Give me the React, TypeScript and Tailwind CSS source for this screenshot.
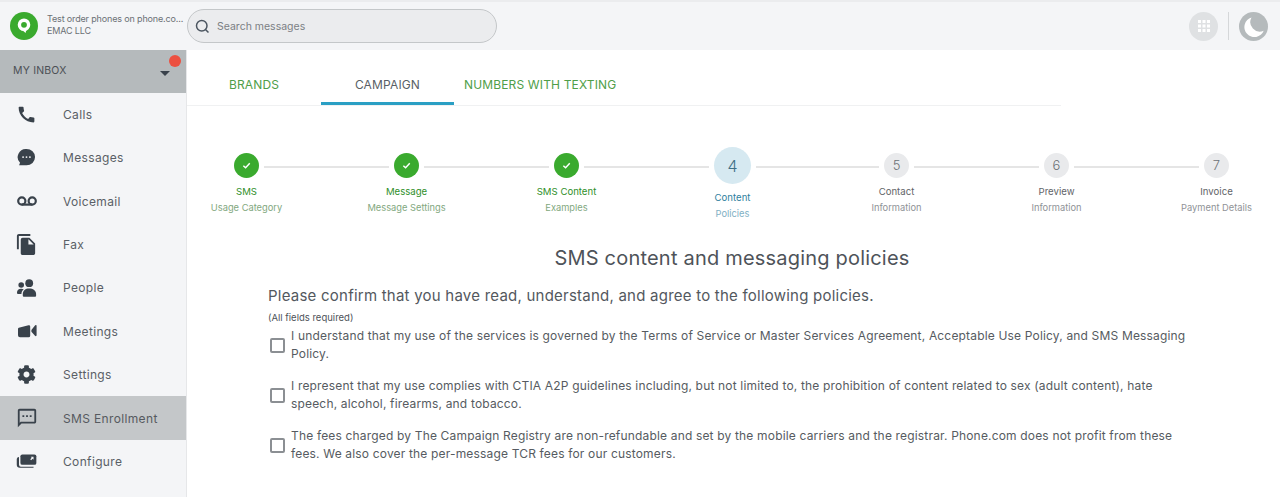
import { FaCog } from "react-icons/fa";
import { MdCall, MdFileCopy, MdOutlineSms, MdApps } from "react-icons/md";
import { Fragment, type ReactNode } from "react";

function LogoMark() {
  return (
    <svg viewBox="0 0 28 28" className="h-7 w-7 shrink-0">
      <circle cx="14" cy="14" r="14" fill="#3aaa2e" />
      <path d="M11.5 17.6 L15.6 21 L16.4 17.4 Z" fill="#fff" />
      <circle cx="14" cy="12.8" r="4.6" fill="none" stroke="#fff" strokeWidth="3.4" />
    </svg>
  );
}

function ChatIcon() {
  return (
    <svg viewBox="0 0 20 20" className="h-[19px] w-[19px]" fill="#39424b">
      <path d="M10 1a9 8.6 0 0 1 0 17.2H2.2l1-2.6A8.6 8.6 0 0 1 10 1z" />
      <circle cx="6.4" cy="9.6" r="1" fill="#f4f5f7" />
      <circle cx="10" cy="9.6" r="1" fill="#f4f5f7" />
      <circle cx="13.6" cy="9.6" r="1" fill="#f4f5f7" />
    </svg>
  );
}

function VoicemailIcon() {
  return (
    <svg viewBox="0 0 20 10" className="h-[10px] w-[20px]" fill="none" stroke="#39424b" strokeWidth="2.2">
      <circle cx="4.8" cy="5" r="3.6" />
      <circle cx="15.2" cy="5" r="3.6" />
      <path d="M4.8 8.6h10.4" />
    </svg>
  );
}

function PeopleIcon() {
  return (
    <svg viewBox="0 0 20 18" className="h-[18px] w-[20px]" fill="#39424b">
      <circle cx="12.2" cy="4.2" r="3.9" />
      <path d="M5.8 15.2c0-3.6 2.6-5.6 6.4-5.6s6.9 2 6.9 5.6v1.5a1 1 0 0 1-1 1H6.8a1 1 0 0 1-1-1z" />
      <circle cx="4.2" cy="6" r="2.8" />
      <path d="M0 13.6c0-2.4 1.6-3.9 4.2-3.9 1 0 1.8.2 2.5.6-1.4 1.1-2.2 2.7-2.3 4.7H1a1 1 0 0 1-1-1z" />
    </svg>
  );
}

function MeetingIcon() {
  return (
    <svg viewBox="0 0 20 14" className="h-[14px] w-[20px]" fill="#39424b">
      <path d="M1.8 3.8 L11.5 1.2a1.4 1.4 0 0 1 1.7 1.3v9.2a1.6 1.6 0 0 1-1.6 1.6H3a2 2 0 0 1-2-2V5a1.2 1.2 0 0 1 .8-1.2z" />
      <path d="M14.4 6 L18 1.4a.9.9 0 0 1 1.6.6v9.2a.9.9 0 0 1-1.6.6 L14.4 7.8z" />
    </svg>
  );
}

function ConfigureIcon() {
  return (
    <svg viewBox="0 0 22 16" className="h-[15px] w-[21px]" fill="#39424b">
      <rect x="4.5" y="0.5" width="17" height="11" rx="2" />
      <path d="M3 3.2v8.3a2 2 0 0 0 2 2h13.5v1.2H4a3.4 3.4 0 0 1-3.4-3.4V5.2A2.4 2.4 0 0 1 3 3.2z" />
      <path d="M15.5 3h3v3l-1-1-1.6 1.6-.9-.9L16.5 4z" fill="#f4f5f7" />
    </svg>
  );
}

const navItems: { label: string; icon: ReactNode; active?: boolean }[] = [
  { label: "Calls", icon: <MdCall className="text-[21px] text-[#39424b]" /> },
  { label: "Messages", icon: <ChatIcon /> },
  { label: "Voicemail", icon: <VoicemailIcon /> },
  { label: "Fax", icon: <MdFileCopy className="text-[23px] text-[#39424b]" /> },
  { label: "People", icon: <PeopleIcon /> },
  { label: "Meetings", icon: <MeetingIcon /> },
  { label: "Settings", icon: <FaCog className="text-[19px] text-[#39424b]" /> },
  { label: "SMS Enrollment", icon: <MdOutlineSms className="text-[22px] text-[#39424b]" />, active: true },
  { label: "Configure", icon: <ConfigureIcon /> },
];

type StepState = "done" | "active" | "todo";

const steps: { title: string; sub: string; state: StepState; num?: number }[] = [
  { title: "SMS", sub: "Usage Category", state: "done" },
  { title: "Message", sub: "Message Settings", state: "done" },
  { title: "SMS Content", sub: "Examples", state: "done" },
  { title: "Content", sub: "Policies", state: "active", num: 4 },
  { title: "Contact", sub: "Information", state: "todo", num: 5 },
  { title: "Preview", sub: "Information", state: "todo", num: 6 },
  { title: "Invoice", sub: "Payment Details", state: "todo", num: 7 },
];

const policies = [
  "I understand that my use of the services is governed by the Terms of Service or Master Services Agreement, Acceptable Use Policy, and SMS Messaging Policy.",
  "I represent that my use complies with CTIA A2P guidelines including, but not limited to, the prohibition of content related to sex (adult content), hate speech, alcohol, firearms, and tobacco.",
  "The fees charged by The Campaign Registry are non-refundable and set by the mobile carriers and the registrar. Phone.com does not profit from these fees. We also cover the per-message TCR fees for our customers.",
];

function Step({ title, sub, state, num }: (typeof steps)[number]) {
  if (state === "active") {
    return (
      <div className="flex w-[37px] flex-col items-center">
        <div className="flex h-[37px] w-[37px] items-center justify-center rounded-full bg-[#d6e9f1] text-[16px] font-light text-[#3f6f85]">
          {num}
        </div>
        <div className="mt-[7px] whitespace-nowrap text-[9.6px] leading-[14px] text-[#2f7f9e]">{title}</div>
        <div className="mt-[2px] whitespace-nowrap text-[9.3px] leading-[14px] text-[#7fb0c4]">{sub}</div>
      </div>
    );
  }
  const done = state === "done";
  return (
    <div className="mt-[6px] flex w-[25px] flex-col items-center">
      <div
        className={
          done
            ? "flex h-[25px] w-[25px] items-center justify-center rounded-full bg-[#3aaa2e] text-white"
            : "flex h-[25px] w-[25px] items-center justify-center rounded-full bg-[#e9eaec] text-[13px] font-light text-[#6b7075]"
        }
      >
        {done ? (
          <svg viewBox="0 0 10 10" className="h-[9px] w-[9px]" fill="none" stroke="currentColor" strokeWidth="1.6">
            <path d="M1.5 5.3 L4 7.6 L8.6 2.6" />
          </svg>
        ) : (
          num
        )}
      </div>
      <div
        className={
          done
            ? "mt-[7px] whitespace-nowrap text-[9.6px] leading-[14px] text-[#2f8f2a]"
            : "mt-[7px] whitespace-nowrap text-[9.6px] leading-[14px] text-[#5f6468]"
        }
      >
        {title}
      </div>
      <div
        className={
          done
            ? "mt-[2px] whitespace-nowrap text-[9.3px] leading-[14px] text-[#82a880]"
            : "mt-[2px] whitespace-nowrap text-[9.3px] leading-[14px] text-[#8f9397]"
        }
      >
        {sub}
      </div>
    </div>
  );
}

export default function App() {
  return (
    <div className="flex h-[497px] w-[1280px] flex-col overflow-hidden bg-white font-['Inter',sans-serif] text-[#5a5f66]">
      <header className="flex h-[50px] shrink-0 items-center border-t-2 border-[#ebecee] bg-[#f4f5f7]">
        <div className="flex w-[187px] shrink-0 items-center pl-[10px]">
          <LogoMark />
          <div className="mb-[2px] ml-[9px] whitespace-nowrap text-[9px] leading-[12px] tracking-[-0.15px] text-[#6b7075]">
            <div>Test order phones on phone.co...</div>
            <div>EMAC LLC</div>
          </div>
        </div>
        <div className="flex h-[34px] w-[310px] items-center rounded-full border-[1.5px] border-[#c4c7c9] bg-[#ebecee] pl-[7px]">
          <svg viewBox="0 0 16 16" className="h-[15px] w-[15px]" fill="none" stroke="#4b5560" strokeWidth="1.6">
            <circle cx="7.2" cy="7.2" r="5.6" />
            <path d="M11.2 11.2 L14.4 14.4" />
          </svg>
          <span className="ml-[7px] pt-[1px] text-[10.5px] text-[#7b7f84]">Search messages</span>
        </div>
        <div className="ml-auto flex items-center pr-[12px]">
          <div className="flex h-[29px] w-[29px] items-center justify-center rounded-full bg-[#dfe1e3]">
            <MdApps className="text-[18px] text-white" />
          </div>
          <div className="mx-[10px] h-[28px] w-px bg-[#d5d7d9]" />
          <div className="h-[29px] w-[29px]">
            <svg viewBox="0 0 29 29" className="h-[29px] w-[29px]">
              <circle cx="14.5" cy="14.5" r="14.5" fill="#b5babc" />
              <path d="M12.5 5.5a10 10 0 1 0 12.2 13.2 a9.5 9.5 0 0 1-12.2-13.2z" fill="#fff" />
            </svg>
          </div>
        </div>
      </header>

      <div className="flex min-h-0 flex-1">
        <aside className="w-[187px] shrink-0 border-r border-[#e6e7e9] bg-[#f4f5f7]">
          <div className="relative flex h-[42.6px] items-center justify-between bg-[#b5babc] pl-[13px] pr-[16px] text-[10.5px] tracking-[0.2px] text-[#4c5055]">
            <span>MY INBOX</span>
            <span className="mt-[5px] h-0 w-0 border-x-[5px] border-t-[5px] border-x-transparent border-t-[#39424b]" />
            <span className="absolute right-[5px] top-[5px] h-3 w-3 rounded-full bg-[#ec5040]" />
          </div>
          {navItems.map((item) => (
            <div
              key={item.label}
              className={
                item.active
                  ? "flex h-[43.4px] items-center bg-[#c4c7c9] text-[12px] tracking-[0.35px] text-[#565a60]"
                  : "flex h-[43.4px] items-center text-[12px] tracking-[0.35px] text-[#5a5f66]"
              }
            >
              <span className="flex w-[63px] justify-center pr-[10px]">{item.icon}</span>
              <span className="pt-[1px]">{item.label}</span>
            </div>
          ))}
        </aside>

        <main className="min-w-0 flex-1">
          <div className="flex h-[56px] w-[874px] border-b border-[#f0f1f2] text-[12px] tracking-[0.15px]">
            <div className="flex w-[134px] items-center justify-center pt-[15px] text-[#4f9e49]">BRANDS</div>
            <div className="flex w-[133px] items-center justify-center border-b-[3px] border-[#2a9fc4] pt-[17px] text-[#5a5f66]">
              CAMPAIGN
            </div>
            <div className="flex items-center pl-[10px] pt-[15px] text-[#4f9e49]">NUMBERS WITH TEXTING</div>
          </div>

          <div className="ml-[47px] mt-[41px] flex items-start">
            {steps.map((step, i) => (
              <Fragment key={step.title}>
                <Step {...step} />
                {i < steps.length - 1 && (
                  <div
                    className={
                      i === 3
                        ? "mx-[5px] mt-[19px] h-[2px] w-[123px] shrink-0 bg-[#e5e5e5]"
                        : "mx-[5px] mt-[19px] h-[2px] w-[125px] shrink-0 bg-[#e5e5e5]"
                    }
                  />
                )}
              </Fragment>
            ))}
          </div>

          <h1 className="mt-[23px] w-[1090px] text-center text-[20px] leading-[28px] tracking-[0.2px] text-[#4e5359]">
            SMS content and messaging policies
          </h1>

          <div className="ml-[81px] mt-[14px] w-[925px]">
            <p className="text-[15px] leading-[20px] tracking-[0.23px] text-[#53585e]">
              Please confirm that you have read, understand, and agree to the following policies.
            </p>
            <p className="mt-[6px] text-[9.5px] leading-[12px] text-[#4e5359]">(All fields required)</p>
            <div className="mt-[3px] flex flex-col gap-[14px]">
              {policies.map((text) => (
                <div key={text} className="flex items-center">
                  <span className="ml-[2px] mr-[6px] h-[15px] w-[15px] shrink-0 rounded-[2px] border-2 border-[#8b8f93]" />
                  <p className="text-[12px] leading-[18px] tracking-[0.17px] text-[#565b61]">{text}</p>
                </div>
              ))}
            </div>
          </div>
        </main>
      </div>
    </div>
  );
}
